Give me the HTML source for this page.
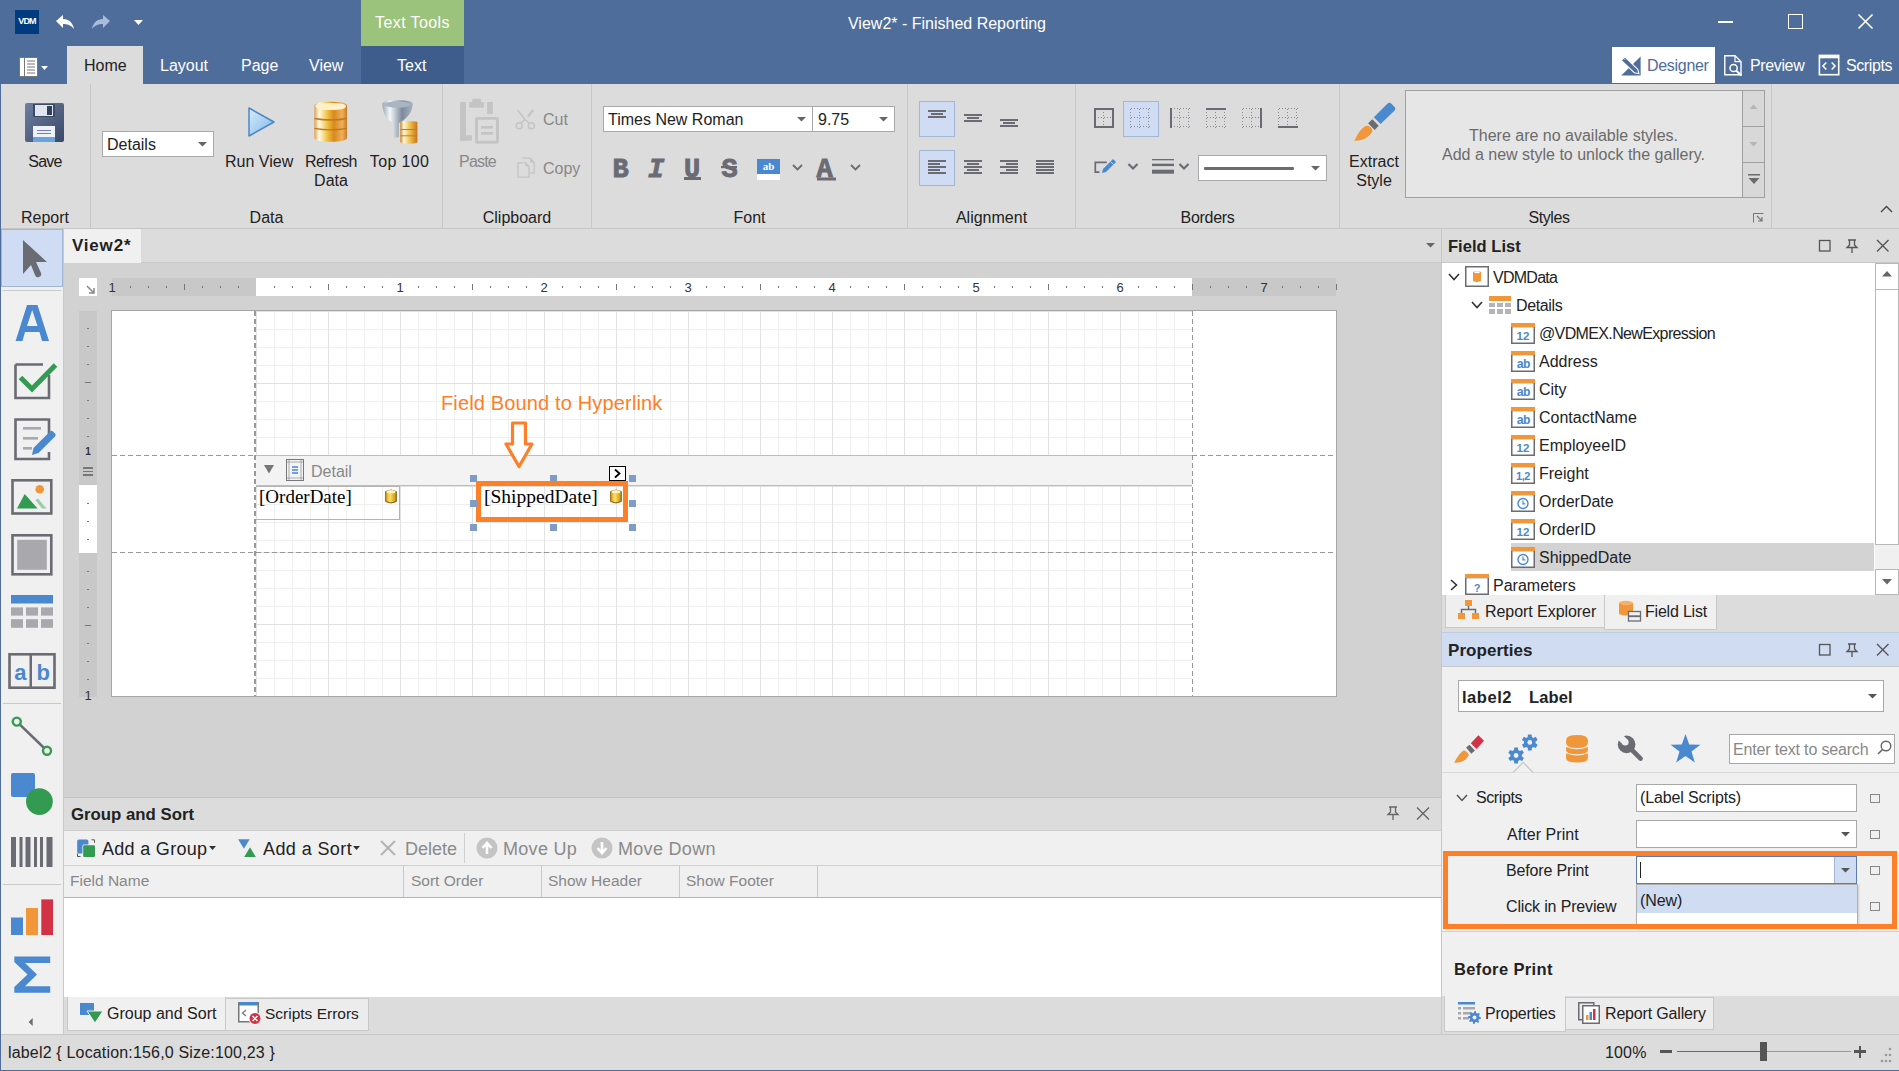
<!DOCTYPE html>
<html><head><meta charset="utf-8">
<style>
*{box-sizing:border-box;margin:0;padding:0}
html,body{width:1899px;height:1071px;overflow:hidden;background:#f0f0f0;font-family:"Liberation Sans",sans-serif;font-size:16px;color:#222}
.a{position:absolute}
.t{position:absolute;white-space:nowrap;line-height:1}
svg{position:absolute;overflow:visible}
</style></head><body>
<!-- title bar -->
<div class="a" style="left:0;top:0;width:1899px;height:84px;background:#4e6d9b"></div>
<div class="a" style="left:361px;top:0;width:103px;height:46px;background:#9cc37b"></div>
<div class="a" style="left:361px;top:46px;width:103px;height:38px;background:#3f5d8c"></div>
<div class="a" style="left:67px;top:46px;width:76px;height:38px;background:#dcdcdc"></div>
<!-- ribbon -->
<div class="a" style="left:0;top:84px;width:1899px;height:145px;background:#dcdcdc;border-bottom:1px solid #c6c6c6"></div>
<!-- toolbox -->
<div class="a" style="left:0;top:229px;width:63px;height:806px;background:#f0f0f0"></div>
<!-- doc tab row -->
<div class="a" style="left:63px;top:229px;width:1378px;height:34px;background:#dcdcdc;border-bottom:1px solid #c8c8c8"></div>
<!-- design area -->
<div class="a" style="left:63px;top:263px;width:1378px;height:534px;background:#d2d2d2"></div>
<!-- group & sort -->
<div class="a" style="left:63px;top:797px;width:1378px;height:238px;background:#f0f0f0;border-top:1px solid #c0c0c0"></div>
<!-- right panel -->
<div class="a" style="left:1441px;top:229px;width:458px;height:806px;background:#f0f0f0;border-left:1px solid #c8c8c8"></div>
<!-- status bar -->
<div class="a" style="left:0;top:1035px;width:1899px;height:36px;background:#dcdcdc;border-top:1px solid #c8c8c8"></div>
<!-- title bar content -->
<div class="a" style="left:15px;top:10px;width:24px;height:24px;background:#003b80"></div>
<div class="t" style="left:15px;top:17px;width:24px;text-align:center;color:#fff;font-size:9px;font-weight:bold;letter-spacing:-0.8px;transform:scaleY(1.0)">VDM</div>
<svg style="left:55px;top:15px" width="20" height="16" viewBox="0 0 20 16"><path d="M1 6 L8 0 L8 4 C14 4 18 8 19 14 C16 10 12 9 8 9 L8 13 Z" fill="#fff"/></svg>
<svg style="left:91px;top:15px" width="20" height="16" viewBox="0 0 20 16"><path d="M19 6 L12 0 L12 4 C6 4 2 8 1 14 C4 10 8 9 12 9 L12 13 Z" fill="#a9bcd9"/></svg>
<svg style="left:134px;top:20px" width="10" height="6" viewBox="0 0 10 6"><path d="M0 0 H9 L4.5 5 Z" fill="#fff"/></svg>
<div class="t" style="left:361px;top:15px;width:103px;text-align:center;color:#fff;font-size:16px;letter-spacing:0.4px">Text Tools</div>
<div class="t" style="left:847px;top:16px;width:200px;text-align:center;color:#fff;font-size:16px">View2* - Finished Reporting</div>
<div class="a" style="left:1718px;top:21px;width:15px;height:1.5px;background:#fff"></div>
<div class="a" style="left:1788px;top:14px;width:15px;height:15px;border:1.5px solid #fff"></div>
<svg style="left:1858px;top:14px" width="15" height="15" viewBox="0 0 15 15"><path d="M0.5 0.5 L14.5 14.5 M14.5 0.5 L0.5 14.5" stroke="#fff" stroke-width="1.6"/></svg>
<!-- tab row -->
<svg style="left:19px;top:57px" width="30" height="20" viewBox="0 0 30 20"><rect x="0.5" y="0.5" width="18" height="19" fill="#fff" stroke="#777"/><rect x="5" y="1" width="1" height="18" fill="#777"/><path d="M8 4h8M8 7h8M8 10h8M8 13h8M8 16h8" stroke="#777" stroke-width="1"/><path d="M22 9 H29 L25.5 13 Z" fill="#fff"/></svg>
<div class="t" style="left:84px;top:58px;font-size:16px;color:#222">Home</div>
<div class="t" style="left:160px;top:58px;font-size:16px;color:#fff">Layout</div>
<div class="t" style="left:241px;top:58px;font-size:16px;color:#fff">Page</div>
<div class="t" style="left:309px;top:58px;font-size:16px;color:#fff">View</div>
<div class="t" style="left:397px;top:58px;font-size:16px;color:#fff">Text</div>
<div class="a" style="left:1612px;top:47px;width:103px;height:36px;background:#fff"></div>
<svg style="left:1620px;top:54px" width="24" height="24" viewBox="1620 54 24 24">
<path d="M1621.3 75.4 L1640.6 56.5 V75.4 Z" fill="#4e6d9b"/>
<path d="M1621.3 60.3 L1624.8 56.8 L1637.8 69.3 L1639 73.8 L1634.5 72.8 Z" fill="#4e6d9b" stroke="#fff" stroke-width="1.1" stroke-linejoin="round"/><path d="M1623 57.8 L1625 59.8" stroke="#fff" stroke-width="0.8"/>
</svg>
<div class="t" style="left:1647px;top:58px;font-size:16px;color:#4e6d9b;letter-spacing:-0.3px">Designer</div>
<svg style="left:1722px;top:53px" width="24" height="25" viewBox="1722 53 24 25">
<path d="M1724.8 55.7 H1735 L1741 61.7 V74.7 H1724.8 Z" fill="none" stroke="#fff" stroke-width="1.4"/>
<path d="M1735 55.7 V61.7 H1741" fill="none" stroke="#fff" stroke-width="1.2"/>
<circle cx="1733.6" cy="68" r="3.6" fill="#4e6d9b" stroke="#fff" stroke-width="1.5"/>
<path d="M1736.3 70.7 L1741.5 75.6" stroke="#fff" stroke-width="2"/>
</svg>
<div class="t" style="left:1750px;top:58px;font-size:16px;color:#fff;letter-spacing:-0.37px">Preview</div>
<svg style="left:1817px;top:53px" width="24" height="24" viewBox="1817 53 24 24">
<rect x="1819.4" y="55.4" width="19.3" height="19.3" fill="none" stroke="#fff" stroke-width="1.6"/>
<rect x="1819" y="55" width="20" height="3.3" fill="#fff"/>
<path d="M1826.3 62.5 L1823 66 L1826.3 69.5 M1831.7 62.5 L1835 66 L1831.7 69.5" fill="none" stroke="#fff" stroke-width="1.6"/>
</svg>
<div class="t" style="left:1846px;top:58px;font-size:16px;color:#fff;letter-spacing:-0.4px">Scripts</div>

<!-- ribbon separators -->
<div class="a" style="left:90px;top:84px;width:1px;height:144px;background:#c8c8c8"></div>
<div class="a" style="left:442px;top:84px;width:1px;height:144px;background:#c8c8c8"></div>
<div class="a" style="left:591px;top:84px;width:1px;height:144px;background:#c8c8c8"></div>
<div class="a" style="left:907px;top:84px;width:1px;height:144px;background:#c8c8c8"></div>
<div class="a" style="left:1075px;top:84px;width:1px;height:144px;background:#c8c8c8"></div>
<div class="a" style="left:1339px;top:84px;width:1px;height:144px;background:#c8c8c8"></div>
<div class="a" style="left:1771px;top:84px;width:1px;height:144px;background:#c8c8c8"></div>
<!-- group labels -->
<div class="t" style="left:0;top:210px;width:90px;text-align:center">Report</div>
<div class="t" style="left:91px;top:210px;width:351px;text-align:center">Data</div>
<div class="t" style="left:443px;top:210px;width:148px;text-align:center">Clipboard</div>
<div class="t" style="left:592px;top:210px;width:315px;text-align:center">Font</div>
<div class="t" style="left:908px;top:210px;width:167px;text-align:center">Alignment</div>
<div class="t" style="left:1076px;top:210px;width:263px;text-align:center;letter-spacing:-0.3px">Borders</div>
<div class="t" style="left:1340px;top:210px;width:418px;text-align:center;letter-spacing:-0.4px">Styles</div>
<svg style="left:1753px;top:213px" width="11" height="10" viewBox="0 0 11 10"><path d="M0.5 9.5 V0.5 H10.5" fill="none" stroke="#777"/><path d="M4 3 L9 8 M9 4 V8 H5" fill="none" stroke="#777" stroke-width="1.2"/></svg>
<svg style="left:1880px;top:205px" width="13" height="8" viewBox="0 0 13 8"><path d="M1 7 L6.5 1.5 L12 7" fill="none" stroke="#444" stroke-width="1.4"/></svg>
<!-- Save -->
<svg style="left:25px;top:103px" width="39" height="39" viewBox="0 0 39 39">
<defs><linearGradient id="sv" x1="0" y1="0" x2="1" y2="1"><stop offset="0" stop-color="#6f7fa0"/><stop offset="1" stop-color="#3a4868"/></linearGradient></defs>
<rect x="0" y="0" width="39" height="39" rx="2" fill="url(#sv)"/>
<rect x="8" y="1" width="22" height="13" fill="#3d4a66"/><rect x="10" y="2" width="18" height="11" fill="#dfe6f0"/><rect x="22" y="3" width="5" height="9" fill="#33405c"/>
<rect x="8" y="23" width="22" height="16" fill="#eef2f8"/><rect x="8" y="34" width="22" height="5" fill="#6aa4da"/><path d="M12 27.5 H26 M12 30.5 H26" stroke="#7282b8" stroke-width="1"/>
</svg>
<div class="t" style="left:0;top:154px;width:90px;text-align:center;letter-spacing:-0.8px">Save</div>
<!-- Details combo -->
<div class="a" style="left:102px;top:131px;width:112px;height:26px;background:#fff;border:1px solid #a9a9a9"></div>
<div class="t" style="left:107px;top:137px">Details</div>
<svg style="left:198px;top:142px" width="9" height="5" viewBox="0 0 9 5"><path d="M0 0 H9 L4.5 4.5 Z" fill="#666"/></svg>
<!-- Run View -->
<svg style="left:248px;top:107px" width="27" height="30" viewBox="0 0 27 30"><defs><linearGradient id="rv" x1="0" y1="0" x2="1" y2="1"><stop offset="0" stop-color="#d6ecfb"/><stop offset="1" stop-color="#7fb8ea"/></linearGradient></defs><path d="M1 1 L26 15 L1 29 Z" fill="url(#rv)" stroke="#4d86c6" stroke-width="1.5" stroke-linejoin="round"/></svg>
<div class="t" style="left:225px;top:154px;width:68px;text-align:center">Run View</div>
<!-- Refresh Data -->
<svg style="left:305px;top:95px" width="55" height="55" viewBox="305 95 55 55">
<defs><linearGradient id="db" x1="0" y1="0" x2="1" y2="0"><stop offset="0" stop-color="#e0a050"/><stop offset="0.15" stop-color="#fffbe6"/><stop offset="0.4" stop-color="#f0c03e"/><stop offset="0.6" stop-color="#d8891e"/><stop offset="0.85" stop-color="#eeb060"/><stop offset="1" stop-color="#c87a22"/></linearGradient></defs>
<path d="M314.3 106 Q314.3 101.7 330.7 101.7 Q347.1 101.7 347.1 106 V137.5 Q347.1 141.8 330.7 141.8 Q314.3 141.8 314.3 137.5 Z" fill="url(#db)"/>
<path d="M315.5 106 Q315.5 103 330.7 103 Q346 103 346 106 Q346 110 330.7 110 Q315.5 110 315.5 106 Z" fill="#fff0c8"/>
<path d="M314.5 118.5 Q330.7 121.5 347 118.5 M314.5 128.3 Q330.7 131.3 347 128.3" fill="none" stroke="#c0781e" stroke-width="1.3"/>
</svg>
<div class="t" style="left:295px;top:154px;width:72px;text-align:center;letter-spacing:-0.6px">Refresh</div>
<div class="t" style="left:295px;top:173px;width:72px;text-align:center">Data</div>
<!-- Top 100 -->
<svg style="left:370px;top:95px" width="60" height="55" viewBox="370 95 60 55">
<defs><linearGradient id="fn2" x1="0" y1="0" x2="1" y2="0"><stop offset="0" stop-color="#9aa6b4"/><stop offset="0.25" stop-color="#f4f8fa"/><stop offset="0.65" stop-color="#7d8a9c"/><stop offset="1" stop-color="#aab4c0"/></linearGradient>
<linearGradient id="db2" x1="0" y1="0" x2="1" y2="0"><stop offset="0" stop-color="#c9822a"/><stop offset="0.2" stop-color="#fff6dc"/><stop offset="0.55" stop-color="#f1c24a"/><stop offset="1" stop-color="#c8741e"/></linearGradient></defs>
<path d="M382.3 104 Q382 100.5 397.5 100.3 Q413 100.5 412.8 104 Q412.5 112 406 118 Q401 122.5 398.8 123 V137 Q396 138.5 393.6 137 V123 Q389 121.5 386 117 Q382.5 111 382.3 104 Z" fill="url(#fn2)"/>
<ellipse cx="397.5" cy="104.5" rx="13" ry="3.3" fill="#a9b5c2"/>
<path d="M400.3 122.5 Q400 121 408.8 121 Q417.5 121 417.4 122.5 V142 Q417.4 143.6 408.8 143.6 Q400.3 143.6 400.3 142 Z" fill="url(#db2)"/>
<path d="M400.5 129.5 H417.2 M400.5 135.8 H417.2" stroke="#c27a25" stroke-width="1"/>
</svg>
<div class="t" style="left:369px;top:154px;width:61px;text-align:center;letter-spacing:0.35px">Top 100</div>
<!-- Paste -->
<svg style="left:452px;top:95px" width="90" height="90" viewBox="452 95 90 90">
<g fill="#c4c4c4">
<rect x="460" y="102" width="6" height="38.8" rx="1"/><rect x="460" y="135.2" width="12" height="5.6" rx="1"/>
<rect x="469.2" y="102" width="14.7" height="5.8" rx="1"/><rect x="472.2" y="98.8" width="8.8" height="4" rx="1"/>
<rect x="487.1" y="102" width="5.8" height="11.9"/>
<rect x="481" y="126" width="11.9" height="2.6"/><rect x="481" y="132" width="11.9" height="2.7"/>
</g>
<rect x="476.5" y="118.4" width="20.9" height="23.9" rx="0.8" fill="none" stroke="#c4c4c4" stroke-width="2.9"/>
<g fill="none" stroke="#c4c4c4">
<path d="M517.5 110 L525 119.5 L529 123" stroke-width="1.4"/><path d="M533.1 110 L528 116.5" stroke-width="2.2"/><path d="M525 119.5 L521 123" stroke-width="1.4"/>
<circle cx="519.2" cy="125.7" r="3" stroke-width="1.4"/><circle cx="531.4" cy="125.7" r="3" stroke-width="1.4"/>
<path d="M522.3 158.2 H530 L534.2 162.4 V173 H529.7" stroke-width="1.3"/>
<path d="M518 162.8 H525.5 L529.1 166.4 V177.2 H518 Z" stroke-width="1.3" fill="#dcdcdc"/>
</g>
<path d="M525.5 162.8 V166.4 H529.1 Z M530 158.2 V162.4 H534.2 Z" fill="#c4c4c4"/>
</svg>
<div class="t" style="left:457px;top:154px;width:41px;text-align:center;color:#888;letter-spacing:-0.8px">Paste</div>

<div class="t" style="left:543px;top:112px;color:#888">Cut</div>

<div class="t" style="left:543px;top:161px;color:#888">Copy</div>

<!-- Font group -->
<div class="a" style="left:603px;top:106px;width:211px;height:26px;background:#fff;border:1px solid #a9a9a9"></div>
<div class="a" style="left:812px;top:106px;width:83px;height:26px;background:#fff;border:1px solid #a9a9a9"></div>
<div class="t" style="left:608px;top:112px">Times New Roman</div>
<div class="t" style="left:818px;top:112px">9.75</div>
<svg style="left:797px;top:117px" width="9" height="5" viewBox="0 0 9 5"><path d="M0 0 H9 L4.5 4.5 Z" fill="#666"/></svg>
<svg style="left:879px;top:117px" width="9" height="5" viewBox="0 0 9 5"><path d="M0 0 H9 L4.5 4.5 Z" fill="#666"/></svg>
<svg style="left:610px;top:155px" width="260" height="28" viewBox="0 0 260 28">
<g fill="#6b6b74" stroke="#6b6b74" stroke-width="0.9" font-family="Liberation Mono" font-weight="bold" font-size="27">
<text x="2.5" y="22">B</text>
<text x="38" y="22" font-style="italic">I</text>
<text x="74" y="22">U</text>
<text x="111.5" y="22">S</text>
<text x="206.5" y="22">A</text>
</g>
<rect x="74" y="22" width="17" height="3" fill="#6b6b74"/>
<rect x="111" y="11" width="16" height="2.2" fill="#6b6b74"/>
<rect x="207" y="22.5" width="19" height="3" fill="#6b6b74"/>
<rect x="147" y="4" width="23" height="15" fill="#4a88cf"/><rect x="147" y="19" width="23" height="6" fill="#fff"/>
<text x="158.5" y="15" font-family="Liberation Serif" font-weight="bold" font-size="11" fill="#fff" text-anchor="middle">ab</text>
<path d="M183 10 L187.5 14.5 L192 10" fill="none" stroke="#6b6b74" stroke-width="1.8"/>
<path d="M241 10 L245.5 14.5 L250 10" fill="none" stroke="#6b6b74" stroke-width="1.8"/>
</svg>
<!-- Alignment group -->
<div class="a" style="left:919px;top:101px;width:36px;height:36px;background:#cfdcf3;border:1px solid #a3b6d6"></div>
<div class="a" style="left:919px;top:150px;width:36px;height:36px;background:#cfdcf3;border:1px solid #a3b6d6"></div>
<svg style="left:900px;top:100px" width="170" height="90" viewBox="0 0 170 90" shape-rendering="crispEdges">
<g fill="#6b6b73">
<rect x="28" y="10" width="18" height="2"/><rect x="31" y="13" width="12" height="2"/><rect x="28" y="16" width="18" height="2"/>
<rect x="64" y="14" width="18" height="2"/><rect x="67" y="17" width="12" height="2"/><rect x="64" y="20" width="18" height="2"/>
<rect x="100" y="19" width="18" height="2"/><rect x="103" y="22" width="12" height="2"/><rect x="100" y="25" width="18" height="2"/>
<rect x="28" y="60" width="18" height="2"/><rect x="28" y="63" width="12" height="2"/><rect x="28" y="66" width="18" height="2"/><rect x="28" y="69" width="12" height="2"/><rect x="28" y="72" width="18" height="2"/>
<rect x="64" y="60" width="18" height="2"/><rect x="67" y="63" width="12" height="2"/><rect x="64" y="66" width="18" height="2"/><rect x="67" y="69" width="12" height="2"/><rect x="64" y="72" width="18" height="2"/>
<rect x="100" y="60" width="18" height="2"/><rect x="106" y="63" width="12" height="2"/><rect x="100" y="66" width="18" height="2"/><rect x="106" y="69" width="12" height="2"/><rect x="100" y="72" width="18" height="2"/>
<rect x="136" y="60" width="18" height="2"/><rect x="136" y="63" width="18" height="2"/><rect x="136" y="66" width="18" height="2"/><rect x="136" y="69" width="18" height="2"/><rect x="136" y="72" width="18" height="2"/>
</g></svg>
<!-- Borders group -->
<div class="a" style="left:1123px;top:101px;width:36px;height:36px;background:#cfdcf3;border:1px solid #a3b6d6"></div>
<svg style="left:1090px;top:104px" width="215" height="28" viewBox="0 0 215 28">
<defs>
<g id="dg" stroke="#8c8c92" stroke-width="1" stroke-dasharray="1 2" fill="none"><path d="M1 0.5 H20 M1 9.5 H20 M1 18.5 H20 M0.5 1 V20 M9.5 1 V20 M18.5 1 V20"/></g>
</defs>
<g transform="translate(4,4)"><rect x="1" y="1" width="18" height="18" fill="none" stroke="#6b6b73" stroke-width="2"/><path d="M9.5 4 V17 M4 9.5 H17" stroke="#8c8c92" stroke-dasharray="1 2" fill="none"/></g>
<g transform="translate(40,4)"><use href="#dg"/></g>
<g transform="translate(80,4)"><use href="#dg"/><rect x="0" y="0" width="2" height="20" fill="#6b6b73"/></g>
<g transform="translate(116,4)"><use href="#dg"/><rect x="0" y="0" width="20" height="2" fill="#6b6b73"/></g>
<g transform="translate(152,4)"><use href="#dg"/><rect x="18" y="0" width="2" height="20" fill="#6b6b73"/></g>
<g transform="translate(188,4)"><use href="#dg"/><rect x="0" y="18" width="20" height="2" fill="#6b6b73"/></g>
</svg>
<svg style="left:1094px;top:158px" width="100" height="16" viewBox="0 0 100 16">
<path d="M12.8 4.4 H1.3 V14.2 H5.5" fill="none" stroke="#6b6b73" stroke-width="1.7"/>
<path d="M8 15 L9 11 L19 1 L22 4 L12 14 Z" fill="#4a88cf"/><path d="M16.5 3.5 L19.5 6.5" stroke="#dcdcdc" stroke-width="0.9"/>
<path d="M34.5 6 L39 10.5 L43.5 6" fill="none" stroke="#6b6b73" stroke-width="2.2"/>
<rect x="58" y="1" width="22" height="1.3" fill="#6b6b73"/><rect x="58" y="5.7" width="22" height="2.4" fill="#6b6b73"/><rect x="58" y="11.7" width="22" height="4" fill="#6b6b73"/>
<path d="M85.5 6 L90 10.5 L94.5 6" fill="none" stroke="#6b6b73" stroke-width="2.2"/>
</svg>
<div class="a" style="left:1198px;top:155px;width:129px;height:26px;background:#fff;border:1px solid #a9a9a9"></div>
<div class="a" style="left:1204px;top:167px;width:90px;height:3px;background:#6b6b73;border-radius:1px"></div>
<svg style="left:1311px;top:166px" width="9" height="5" viewBox="0 0 9 5"><path d="M0 0 H9 L4.5 4.5 Z" fill="#666"/></svg>
<!-- Extract Style -->
<svg style="left:1340px;top:85px" width="70" height="70" viewBox="1340 85 70 70">
<path d="M1373.8 117.2 L1387.6 103.6 Q1389.4 101.8 1391.2 103.6 L1394.6 107 Q1396.4 108.8 1394.6 110.6 L1380.6 123.9 Z" fill="#4a88cf"/>
<path d="M1368.1 123.2 L1372.4 119.2 L1378.7 125.8 L1374.7 129.9 Z" fill="#6b6b73"/>
<path d="M1354.5 141 Q1358 131 1364.7 126.4 Q1368 124.5 1371 127.5 Q1373.5 130.5 1371.5 133 Q1366 140.5 1354.5 141 Z" fill="#f2963a"/>
</svg>
<div class="t" style="left:1340px;top:154px;width:68px;text-align:center">Extract</div>
<div class="t" style="left:1340px;top:173px;width:68px;text-align:center">Style</div>
<!-- Styles gallery -->
<div class="a" style="left:1405px;top:90px;width:360px;height:108px;background:#e6e6e6;border:1px solid #a0a0a0"></div>
<div class="a" style="left:1742px;top:90px;width:23px;height:108px;background:#d8d8d8;border:1px solid #a0a0a0"></div>
<div class="a" style="left:1742px;top:126px;width:23px;height:1px;background:#a0a0a0"></div>
<div class="a" style="left:1742px;top:162px;width:23px;height:1px;background:#a0a0a0"></div>
<svg style="left:1748px;top:104px" width="12" height="82" viewBox="0 0 12 82"><path d="M1.5 5 L5.5 0.5 L9.5 5 Z" fill="#b5b5b5"/><path d="M1.5 38 L5.5 42.5 L9.5 38 Z" fill="#b5b5b5"/><rect x="0" y="70" width="12" height="1.5" fill="#6b6b6b"/><path d="M0.5 74 L6 80 L11.5 74 Z" fill="#6b6b6b"/></svg>
<div class="t" style="left:1405px;top:128px;width:337px;text-align:center;color:#6b6b6b">There are no available styles.</div>
<div class="t" style="left:1405px;top:147px;width:337px;text-align:center;color:#6b6b6b">Add a new style to unlock the gallery.</div>

<!-- toolbox -->
<div class="a" style="left:1px;top:229px;width:62px;height:58px;background:#cfdcf3;border:1px solid #a3b6d6"></div>
<svg style="left:0;top:229px" width="63" height="806" viewBox="0 229 63 806">
<path d="M23 240 L47 262 L36 262 L41 273 Q42 276 39 277 Q36 278 35 275 L31 265 L23 274 Z" fill="#6b6b73"/>
<rect x="3" y="290" width="58" height="1" fill="#c8c8c8"/>
<path d="M15.6 341 L27 305 L37.5 305 L49 341 L42 341 L39.5 332 L25 332 L22.5 341 Z M27 326 L37.5 326 L32.2 310 Z" fill="#4a88cf" fill-rule="evenodd"/>
<path d="M15.5 364.5 H43 M49 375 V398 H15.5 V364.5" fill="none" stroke="#6b6b73" stroke-width="2.6"/>
<path d="M20.5 377.5 L32 389 L55.5 365" fill="none" stroke="#339a52" stroke-width="5"/>
<path d="M49 435 V419.5 H15.5 V459 H49 V452" fill="none" stroke="#6b6b73" stroke-width="2.6"/>
<rect x="23" y="427" width="18" height="2.6" fill="#a8a8ad"/><rect x="23" y="437" width="15" height="2.6" fill="#a8a8ad"/><rect x="23" y="447" width="9" height="2.6" fill="#a8a8ad"/>
<path d="M32 455 L33.5 448 L50 431.5 Q51.5 430 53 431.5 L55 433.5 Q56.5 435 55 436.5 L38.5 453 Z" fill="#4a88cf"/>
<rect x="12.5" y="480.3" width="38.8" height="33.2" fill="none" stroke="#6b6b73" stroke-width="2.6"/>
<circle cx="39.7" cy="489.3" r="4.3" fill="#f2963a"/>
<path d="M17 508.6 L24.7 494 L37.6 508.6 Z" fill="#339a52"/><path d="M35.4 500 L38 498.5 L46.5 508.6 L42 508.6 Z" fill="#9ccfa9"/>
<rect x="12.5" y="535.3" width="38.8" height="39" fill="none" stroke="#6b6b73" stroke-width="2.6"/>
<rect x="17.2" y="539.8" width="29.6" height="30" fill="#a8a8ad"/>
<rect x="11" y="595" width="42" height="8.5" fill="#4a88cf"/>
<g fill="#a8a8ad"><rect x="11" y="607.4" width="12" height="8.2"/><rect x="26" y="607.4" width="12" height="8.2"/><rect x="41" y="607.4" width="12" height="8.2"/><rect x="11" y="619.2" width="12" height="8.6"/><rect x="26" y="619.2" width="12" height="8.6"/><rect x="41" y="619.2" width="12" height="8.6"/></g>
<rect x="9.5" y="654.3" width="45" height="33.4" fill="none" stroke="#6b6b73" stroke-width="2.6"/><rect x="29.5" y="654" width="2.5" height="34" fill="#6b6b73"/>
<text x="20.3" y="679.5" font-family="Liberation Sans" font-weight="bold" font-size="22" fill="#4a88cf" text-anchor="middle">a</text>
<text x="43.3" y="679.5" font-family="Liberation Sans" font-weight="bold" font-size="22" fill="#4a88cf" text-anchor="middle">b</text>
<rect x="3" y="703" width="58" height="1" fill="#c8c8c8"/>
<path d="M16.8 721.6 L47 750.8" stroke="#6b6b73" stroke-width="2.6"/>
<circle cx="16.8" cy="721.6" r="4" fill="#f0f0f0" stroke="#339a52" stroke-width="2.4"/>
<circle cx="47" cy="750.8" r="4" fill="#f0f0f0" stroke="#339a52" stroke-width="2.4"/>
<rect x="11" y="773" width="24" height="24" rx="2" fill="#4a88cf"/>
<circle cx="39.4" cy="801.6" r="13.4" fill="#339a52"/>
<g fill="#6b6b73"><rect x="11" y="837" width="5" height="30"/><rect x="19.5" y="837" width="3" height="30"/><rect x="25.5" y="837" width="5" height="30"/><rect x="34" y="837" width="3" height="30"/><rect x="40" y="837" width="3" height="30"/><rect x="46.5" y="837" width="6" height="30"/></g>
<rect x="3" y="884" width="58" height="1" fill="#c8c8c8"/>
<rect x="11" y="917.5" width="12" height="17.5" fill="#4a88cf"/><rect x="26" y="908" width="12" height="27" fill="#f2963a"/><rect x="41.3" y="899.4" width="11.7" height="35.6" fill="#d33145"/>
<path d="M14.3 956.5 H50.2 V963 H25 L37 974.6 L25 986.2 H50.2 V992.7 H14.3 V987 L27.5 974.6 L14.3 962 Z" fill="#4a88cf"/>
<path d="M32.7 1018 V1026 L28.6 1022 Z" fill="#6b6b73"/>
</svg>

<!-- design surface -->
<div class="a" style="left:63px;top:229px;width:78px;height:34px;background:#f0f0f0"></div>
<div class="t" style="left:72px;top:237px;font-weight:bold;font-size:17px;letter-spacing:0.8px;color:#222">View2*</div>
<svg style="left:1426px;top:243px" width="9" height="5" viewBox="0 0 9 5"><path d="M0 0 H9 L4.5 4.5 Z" fill="#666"/></svg>
<div class="a" style="left:79px;top:278px;width:18px;height:18px;background:#fff"></div>
<svg style="left:86px;top:285px" width="9" height="9" viewBox="0 0 9 9"><path d="M1 1 L7 7 M8 3 V8 H3" fill="none" stroke="#888" stroke-width="1.5"/></svg>
<div class="a" style="left:112px;top:278px;width:144px;height:18px;background:#c8c8c8"></div>
<div class="a" style="left:256px;top:278px;width:936px;height:18px;background:#fff"></div>
<div class="a" style="left:1192px;top:278px;width:144px;height:18px;background:#c8c8c8"></div>
<div class="a" style="left:79px;top:311px;width:18px;height:174px;background:#c8c8c8"></div>
<div class="a" style="left:79px;top:485px;width:18px;height:68px;background:#fff"></div>
<div class="a" style="left:79px;top:553px;width:18px;height:144px;background:#c8c8c8"></div>
<svg style="left:0;top:0" width="1899" height="1071" viewBox="0 0 1899 1071" shape-rendering="crispEdges">
<g fill="#777">
<rect x="130" y="286" width="1" height="2"/>
<rect x="148" y="286" width="1" height="2"/>
<rect x="166" y="286" width="1" height="2"/>
<rect x="184" y="284" width="1" height="6"/>
<rect x="202" y="286" width="1" height="2"/>
<rect x="220" y="286" width="1" height="2"/>
<rect x="238" y="286" width="1" height="2"/>
<rect x="274" y="286" width="1" height="2"/>
<rect x="292" y="286" width="1" height="2"/>
<rect x="310" y="286" width="1" height="2"/>
<rect x="328" y="284" width="1" height="6"/>
<rect x="346" y="286" width="1" height="2"/>
<rect x="364" y="286" width="1" height="2"/>
<rect x="382" y="286" width="1" height="2"/>
<rect x="418" y="286" width="1" height="2"/>
<rect x="436" y="286" width="1" height="2"/>
<rect x="454" y="286" width="1" height="2"/>
<rect x="472" y="284" width="1" height="6"/>
<rect x="490" y="286" width="1" height="2"/>
<rect x="508" y="286" width="1" height="2"/>
<rect x="526" y="286" width="1" height="2"/>
<rect x="562" y="286" width="1" height="2"/>
<rect x="580" y="286" width="1" height="2"/>
<rect x="598" y="286" width="1" height="2"/>
<rect x="616" y="284" width="1" height="6"/>
<rect x="634" y="286" width="1" height="2"/>
<rect x="652" y="286" width="1" height="2"/>
<rect x="670" y="286" width="1" height="2"/>
<rect x="706" y="286" width="1" height="2"/>
<rect x="724" y="286" width="1" height="2"/>
<rect x="742" y="286" width="1" height="2"/>
<rect x="760" y="284" width="1" height="6"/>
<rect x="778" y="286" width="1" height="2"/>
<rect x="796" y="286" width="1" height="2"/>
<rect x="814" y="286" width="1" height="2"/>
<rect x="850" y="286" width="1" height="2"/>
<rect x="868" y="286" width="1" height="2"/>
<rect x="886" y="286" width="1" height="2"/>
<rect x="904" y="284" width="1" height="6"/>
<rect x="922" y="286" width="1" height="2"/>
<rect x="940" y="286" width="1" height="2"/>
<rect x="958" y="286" width="1" height="2"/>
<rect x="994" y="286" width="1" height="2"/>
<rect x="1012" y="286" width="1" height="2"/>
<rect x="1030" y="286" width="1" height="2"/>
<rect x="1048" y="284" width="1" height="6"/>
<rect x="1066" y="286" width="1" height="2"/>
<rect x="1084" y="286" width="1" height="2"/>
<rect x="1102" y="286" width="1" height="2"/>
<rect x="1138" y="286" width="1" height="2"/>
<rect x="1156" y="286" width="1" height="2"/>
<rect x="1174" y="286" width="1" height="2"/>
<rect x="1192" y="284" width="1" height="6"/>
<rect x="1210" y="286" width="1" height="2"/>
<rect x="1228" y="286" width="1" height="2"/>
<rect x="1246" y="286" width="1" height="2"/>
<rect x="1282" y="286" width="1" height="2"/>
<rect x="1300" y="286" width="1" height="2"/>
<rect x="1318" y="286" width="1" height="2"/>
<rect x="1336" y="284" width="1" height="6"/>
</g>
</svg>
<div class="t" style="left:102px;top:281px;width:20px;text-align:center;font-size:13px;color:#333">1</div>
<div class="t" style="left:390px;top:281px;width:20px;text-align:center;font-size:13px;color:#333">1</div>
<div class="t" style="left:534px;top:281px;width:20px;text-align:center;font-size:13px;color:#333">2</div>
<div class="t" style="left:678px;top:281px;width:20px;text-align:center;font-size:13px;color:#333">3</div>
<div class="t" style="left:822px;top:281px;width:20px;text-align:center;font-size:13px;color:#333">4</div>
<div class="t" style="left:966px;top:281px;width:20px;text-align:center;font-size:13px;color:#333">5</div>
<div class="t" style="left:1110px;top:281px;width:20px;text-align:center;font-size:13px;color:#333">6</div>
<div class="t" style="left:1254px;top:281px;width:20px;text-align:center;font-size:13px;color:#333">7</div>
<svg style="left:0;top:0" width="1899" height="1071" viewBox="0 0 1899 1071" shape-rendering="crispEdges"><g fill="#777">
<rect x="87" y="328" width="2" height="1"/>
<rect x="87" y="346" width="2" height="1"/>
<rect x="87" y="364" width="2" height="1"/>
<rect x="87" y="400" width="2" height="1"/>
<rect x="87" y="418" width="2" height="1"/>
<rect x="87" y="436" width="2" height="1"/>
<rect x="85" y="382" width="6" height="1"/>
<rect x="87" y="503" width="2" height="1"/>
<rect x="87" y="521" width="2" height="1"/>
<rect x="87" y="539" width="2" height="1"/>
<rect x="87" y="571" width="2" height="1"/>
<rect x="87" y="589" width="2" height="1"/>
<rect x="87" y="607" width="2" height="1"/>
<rect x="87" y="643" width="2" height="1"/>
<rect x="87" y="661" width="2" height="1"/>
<rect x="87" y="679" width="2" height="1"/>
<rect x="85" y="625" width="6" height="1"/>
<rect x="83" y="467" width="10" height="1.5"/><rect x="83" y="470.5" width="10" height="1.5"/><rect x="83" y="474" width="10" height="1.5"/>
</g></svg>
<div class="t" style="left:80px;top:447px;width:16px;text-align:center;font-size:10px;font-weight:bold;color:#333">1</div>
<div class="t" style="left:78px;top:689px;width:20px;text-align:center;font-size:13px;color:#333">1</div>
<div class="a" style="left:111px;top:310px;width:1226px;height:387px;background:#fff;border:1px solid #a6a6a6"></div>
<div class="a" style="left:256px;top:311px;width:936px;height:144px;background-image:linear-gradient(to right,#e2e2e2 1px,transparent 1px),linear-gradient(to bottom,#e2e2e2 1px,transparent 1px),linear-gradient(to right,#efefef 1px,transparent 1px),linear-gradient(to bottom,#efefef 1px,transparent 1px);background-size:72px 72px,72px 72px,18px 18px,18px 18px"></div>
<div class="a" style="left:256px;top:486px;width:936px;height:67px;background-image:linear-gradient(to right,#e2e2e2 1px,transparent 1px),linear-gradient(to bottom,#e2e2e2 1px,transparent 1px),linear-gradient(to right,#efefef 1px,transparent 1px),linear-gradient(to bottom,#efefef 1px,transparent 1px);background-size:72px 72px,72px 72px,18px 18px,18px 18px"></div>
<div class="a" style="left:256px;top:552px;width:936px;height:144px;background-image:linear-gradient(to right,#e2e2e2 1px,transparent 1px),linear-gradient(to bottom,#e2e2e2 1px,transparent 1px),linear-gradient(to right,#efefef 1px,transparent 1px),linear-gradient(to bottom,#efefef 1px,transparent 1px);background-size:72px 72px,72px 72px,18px 18px,18px 18px"></div>
<div class="a" style="left:256px;top:455px;width:936px;height:31px;background:#f3f3f3;border-top:1px solid #bdbdbd;border-bottom:1px solid #bdbdbd"></div>
<div class="a" style="left:112px;top:455px;width:144px;height:1px;background-image:linear-gradient(to right,#999 5px,transparent 5px);background-size:8px 1px"></div>
<div class="a" style="left:1192px;top:455px;width:144px;height:1px;background-image:linear-gradient(to right,#999 5px,transparent 5px);background-size:8px 1px"></div>
<div class="a" style="left:112px;top:552px;width:1224px;height:1px;background-image:linear-gradient(to right,#999 5px,transparent 5px);background-size:8px 1px"></div>
<div class="a" style="left:254px;top:311px;width:2px;height:385px;background-image:linear-gradient(to bottom,#999 5px,transparent 5px);background-size:2px 8px"></div>
<div class="a" style="left:1192px;top:311px;width:1px;height:385px;background-image:linear-gradient(to bottom,#999 5px,transparent 5px);background-size:1px 8px"></div>
<svg style="left:264px;top:465px" width="10" height="9" viewBox="0 0 10 9"><path d="M0 0 H10 L5 8.5 Z" fill="#777"/></svg>
<svg style="left:286px;top:459px" width="18" height="22" viewBox="0 0 18 22"><rect x="0.5" y="0.5" width="17" height="21" fill="#f3f3f3" stroke="#777"/><path d="M3 1 V21 M15 1 V21 M1 3 H17 M1 19 H17" stroke="#999" stroke-width="0.8"/><path d="M6 8 H12 M6 11 H12 M6 14 H12" stroke="#4a88cf" stroke-width="1.3"/></svg>
<div class="t" style="left:311px;top:464px;font-size:16px;color:#888">Detail</div>
<div class="a" style="left:256px;top:486px;width:144px;height:34px;border:1px solid #b4b4b4;border-left:none"></div>
<div class="t" style="left:259px;top:487px;font-family:'Liberation Serif',serif;font-size:19px;color:#000">[OrderDate]</div>
<svg style="left:385px;top:489px" width="12" height="15" viewBox="0 0 12 15"><defs><linearGradient id="g385" x1="0" x2="1"><stop offset="0" stop-color="#d9a21a"/><stop offset="0.4" stop-color="#ffe066"/><stop offset="1" stop-color="#c28a10"/></linearGradient></defs><path d="M0.7 2.5 Q6 -0.5 11.3 2.5 V12.5 Q6 15.5 0.7 12.5 Z" fill="url(#g385)" stroke="#8a5a08" stroke-width="1"/><ellipse cx="6" cy="2.7" rx="4.5" ry="1.6" fill="#fff3c0"/></svg>
<div class="t" style="left:484px;top:487px;font-family:'Liberation Serif',serif;font-size:19.5px;color:#000">[ShippedDate]</div>
<svg style="left:610px;top:489px" width="12" height="15" viewBox="0 0 12 15"><defs><linearGradient id="g610" x1="0" x2="1"><stop offset="0" stop-color="#d9a21a"/><stop offset="0.4" stop-color="#ffe066"/><stop offset="1" stop-color="#c28a10"/></linearGradient></defs><path d="M0.7 2.5 Q6 -0.5 11.3 2.5 V12.5 Q6 15.5 0.7 12.5 Z" fill="url(#g610)" stroke="#8a5a08" stroke-width="1"/><ellipse cx="6" cy="2.7" rx="4.5" ry="1.6" fill="#fff3c0"/></svg>
<div class="a" style="left:476px;top:481px;width:152px;height:41px;border:5px solid #fd7f28"></div>
<div class="a" style="left:470px;top:475px;width:7px;height:7px;background:#7f9cc4"></div>
<div class="a" style="left:470px;top:500px;width:7px;height:7px;background:#7f9cc4"></div>
<div class="a" style="left:470px;top:524px;width:7px;height:7px;background:#7f9cc4"></div>
<div class="a" style="left:550px;top:475px;width:7px;height:7px;background:#7f9cc4"></div>
<div class="a" style="left:550px;top:524px;width:7px;height:7px;background:#7f9cc4"></div>
<div class="a" style="left:629px;top:475px;width:7px;height:7px;background:#7f9cc4"></div>
<div class="a" style="left:629px;top:500px;width:7px;height:7px;background:#7f9cc4"></div>
<div class="a" style="left:629px;top:524px;width:7px;height:7px;background:#7f9cc4"></div>
<div class="a" style="left:609px;top:466px;width:17px;height:15px;background:#fff;border:1px solid #000"></div>
<svg style="left:613px;top:468px" width="9" height="11" viewBox="0 0 9 11"><path d="M2 1.5 L6.5 5.5 L2 9.5" fill="none" stroke="#000" stroke-width="1.8"/></svg>
<div class="t" style="left:441px;top:393px;font-size:20px;letter-spacing:0.15px;color:#fd7f28">Field Bound to Hyperlink</div>
<svg style="left:503px;top:421px" width="32" height="49" viewBox="0 0 32 49"><path d="M9.5 2 H22.5 V23 H29 L16 45.5 L3 23 H9.5 Z" fill="#fff" stroke="#fd7f28" stroke-width="3.2" stroke-linejoin="round"/></svg>
<!-- group and sort -->
<div class="a" style="left:63px;top:797px;width:1378px;height:34px;background:#dcdcdc;border-top:1px solid #c4c4c4;border-bottom:1px solid #cfcfcf"></div>
<div class="t" style="left:71px;top:807px;font-weight:bold;font-size:16.8px;color:#222">Group and Sort</div>
<svg style="left:1387px;top:806px" width="44" height="15" viewBox="0 0 44 15"><path d="M2 1 H10 M3.5 1 V6 L1 8.5 H11 L8.5 6 V1 M6 8.5 V14" fill="none" stroke="#666" stroke-width="1.3"/><path d="M30 1.5 L42 13.5 M42 1.5 L30 13.5" stroke="#666" stroke-width="1.4"/></svg>
<div class="a" style="left:63px;top:831px;width:1378px;height:35px;background:#f0f0f0;border-bottom:1px solid #d0d0d0"></div>
<svg style="left:75px;top:837px" width="22" height="22" viewBox="75 837 22 22"><path d="M91.5 839.8 H94.5 V842.8 M77.5 853.5 V856.5 H80.5" fill="none" stroke="#555" stroke-width="1"/><rect x="77.2" y="839.4" width="11.2" height="14.2" rx="1.5" fill="#4a88cf"/><rect x="82.4" y="844.4" width="13.4" height="13.4" rx="1.5" fill="#f0f0f0"/><rect x="83.2" y="845.2" width="11.8" height="11.8" rx="1.2" fill="#339a52"/></svg>
<div class="t" style="left:102px;top:840px;font-size:18px;letter-spacing:0.3px">Add a Group</div>
<svg style="left:209px;top:846px" width="7" height="4" viewBox="0 0 7 4"><path d="M0 0 H7 L3.5 4 Z" fill="#333"/></svg>
<svg style="left:236px;top:837px" width="22" height="22" viewBox="236 837 22 22"><path d="M238.1 839.2 H249.7 L243.9 848.8 Z" fill="#4a88cf"/><path d="M244.2 857 H255.8 L250 847.3 Z" fill="#339a52"/></svg>
<div class="t" style="left:263px;top:840px;font-size:18px;letter-spacing:0.4px">Add a Sort</div>
<svg style="left:353px;top:846px" width="7" height="4" viewBox="0 0 7 4"><path d="M0 0 H7 L3.5 4 Z" fill="#333"/></svg>
<svg style="left:380px;top:840px" width="16" height="16" viewBox="0 0 16 16"><path d="M1 1 L15 15 M15 1 L1 15" stroke="#b4b4b4" stroke-width="2"/></svg>
<div class="t" style="left:405px;top:840px;font-size:18px;color:#8a8a8a">Delete</div>
<div class="a" style="left:464px;top:833px;width:1px;height:30px;background:#d0d0d0"></div>
<svg style="left:476px;top:837px" width="22" height="22" viewBox="0 0 22 22"><circle cx="11" cy="11" r="10.5" fill="#c4c4c4"/><path d="M11 17 V7 M6.5 11 L11 6 L15.5 11" fill="none" stroke="#fff" stroke-width="2.6"/></svg>
<div class="t" style="left:503px;top:840px;font-size:18px;color:#8a8a8a;letter-spacing:0.3px">Move Up</div>
<svg style="left:591px;top:837px" width="22" height="22" viewBox="0 0 22 22"><circle cx="11" cy="11" r="10.5" fill="#c4c4c4"/><path d="M11 5 V15 M6.5 11 L11 16 L15.5 11" fill="none" stroke="#fff" stroke-width="2.6"/></svg>
<div class="t" style="left:618px;top:840px;font-size:18px;color:#8a8a8a;letter-spacing:0.3px">Move Down</div>
<div class="a" style="left:63px;top:866px;width:1378px;height:32px;background:#f0f0f0;border-bottom:1px solid #b4b4b4"></div>
<div class="a" style="left:403px;top:866px;width:1px;height:31px;background:#c8c8c8"></div>
<div class="a" style="left:541px;top:866px;width:1px;height:31px;background:#c8c8c8"></div>
<div class="a" style="left:679px;top:866px;width:1px;height:31px;background:#c8c8c8"></div>
<div class="a" style="left:817px;top:866px;width:1px;height:31px;background:#c8c8c8"></div>
<div class="t" style="left:70px;top:873px;font-size:15.5px;color:#888">Field Name</div>
<div class="t" style="left:411px;top:873px;font-size:15.5px;color:#888">Sort Order</div>
<div class="t" style="left:548px;top:873px;font-size:15.5px;color:#888">Show Header</div>
<div class="t" style="left:686px;top:873px;font-size:15.5px;color:#888">Show Footer</div>
<div class="a" style="left:63px;top:898px;width:1378px;height:99px;background:#fff"></div>
<div class="a" style="left:63px;top:997px;width:1378px;height:38px;background:#dcdcdc"></div>
<div class="a" style="left:67px;top:997px;width:159px;height:34px;background:#f0f0f0;border:1px solid #c8c8c8;border-top:none"></div>
<div class="a" style="left:225px;top:998px;width:144px;height:33px;background:#ececec;border:1px solid #c8c8c8"></div>
<svg style="left:80px;top:1003px" width="23" height="21" viewBox="0 0 23 21"><rect x="0" y="0" width="14" height="12" fill="#4a88cf"/><path d="M7 8 H23 L15 20 Z" fill="#339a52" stroke="#f0f0f0" stroke-width="1"/></svg>
<div class="t" style="left:107px;top:1006px;font-size:16px">Group and Sort</div>
<svg style="left:238px;top:1001px" width="24" height="24" viewBox="0 0 24 24"><rect x="0.75" y="1.75" width="19.5" height="19" fill="#fff" stroke="#777" stroke-width="1.5"/><rect x="1" y="1" width="19" height="3.5" fill="#4a88cf"/><path d="M8 9 L4.5 12 L8 15" fill="none" stroke="#777" stroke-width="1.3"/><circle cx="17" cy="17.5" r="6" fill="#d33145" stroke="#fff" stroke-width="1"/><path d="M14.5 15 L19.5 20 M19.5 15 L14.5 20" stroke="#fff" stroke-width="1.5"/></svg>
<div class="t" style="left:265px;top:1006px;font-size:15.5px">Scripts Errors</div>

<!-- right panel -->
<div class="a" style="left:1442px;top:229px;width:457px;height:34px;background:#dcdcdc;border-bottom:1px solid #c8c8c8"></div>
<div class="t" style="left:1448px;top:238px;font-size:16.5px;font-weight:bold;color:#222;letter-spacing:0.039px">Field List</div>
<svg style="left:1818px;top:239px" width="72" height="14" viewBox="0 0 72 14"><rect x="1.5" y="1.5" width="10.5" height="10.5" fill="none" stroke="#555" stroke-width="1.3"/><path d="M30 1 H38 M31.5 1 V6 L29 8.5 H39 L36.5 6 V1 M34 8.5 V14" fill="none" stroke="#555" stroke-width="1.3"/><path d="M59 1 L70.5 12.5 M70.5 1 L59 12.5" stroke="#555" stroke-width="1.4"/></svg>
<div class="a" style="left:1442px;top:263px;width:457px;height:332px;background:#fff"></div>
<div class="a" style="left:1511px;top:543px;width:363px;height:28px;background:#d3d3d3"></div>
<div class="a" style="left:1875px;top:263px;width:24px;height:332px;background:#f0f0f0"></div>
<div class="a" style="left:1875px;top:263px;width:24px;height:27px;background:#fff;border:1px solid #b8b8b8"></div>
<div class="a" style="left:1875px;top:289px;width:24px;height:256px;background:#fff;border:1px solid #b8b8b8"></div>
<div class="a" style="left:1875px;top:569px;width:24px;height:26px;background:#fff;border:1px solid #b8b8b8"></div>
<svg style="left:1882px;top:271px" width="10" height="6" viewBox="0 0 10 6"><path d="M0 5.5 L5 0 L10 5.5 Z" fill="#666"/></svg>
<svg style="left:1882px;top:579px" width="10" height="6" viewBox="0 0 10 6"><path d="M0 0 L5 5.5 L10 0 Z" fill="#666"/></svg>
<svg style="left:1448px;top:273px" width="12" height="8" viewBox="0 0 12 8"><path d="M1 1 L6 6.5 L11 1" fill="none" stroke="#333" stroke-width="1.6"/></svg>
<svg style="left:1471px;top:301px" width="12" height="8" viewBox="0 0 12 8"><path d="M1 1 L6 6.5 L11 1" fill="none" stroke="#333" stroke-width="1.6"/></svg>
<svg style="left:1450px;top:579px" width="8" height="12" viewBox="0 0 8 12"><path d="M1 1 L6.5 6 L1 11" fill="none" stroke="#333" stroke-width="1.6"/></svg>
<svg style="left:1465px;top:266px" width="24" height="21" viewBox="0 0 24 21"><rect x="0.75" y="0.75" width="22.5" height="19.5" fill="#fff" stroke="#6b6b73" stroke-width="1.5"/><path d="M8 6 Q12 4 16 6 V15 Q12 17 8 15 Z" fill="#f2963a"/><ellipse cx="12" cy="6.3" rx="3" ry="1" fill="#fff"/></svg>
<div class="t" style="left:1493px;top:270px;color:#222;letter-spacing:-0.736px">VDMData</div>
<svg style="left:1489px;top:296px" width="22" height="18" viewBox="0 0 22 18"><rect x="0" y="0" width="22" height="5" fill="#f2963a"/><g fill="#b4b4b8"><rect x="0" y="7" width="6" height="4"/><rect x="8" y="7" width="6" height="4"/><rect x="16" y="7" width="6" height="4"/><rect x="0" y="13" width="6" height="5"/><rect x="8" y="13" width="6" height="5"/><rect x="16" y="13" width="6" height="5"/></g></svg>
<div class="t" style="left:1516px;top:298px;color:#222;letter-spacing:-0.372px">Details</div>
<svg style="left:1511px;top:323px" width="24" height="21" viewBox="0 0 24 21"><rect x="0.75" y="3.5" width="22.5" height="16.75" fill="#fff" stroke="#6b6b73" stroke-width="1.5"/><rect x="0" y="0" width="24" height="4" fill="#f2963a"/><text x="12" y="16.5" text-anchor="middle" font-family="Liberation Sans" font-weight="bold" font-size="11.5" fill="#4a88cf">12</text></svg>
<div class="t" style="left:1539px;top:326px;color:#222;letter-spacing:-0.637px">@VDMEX.NewExpression</div>
<svg style="left:1511px;top:351px" width="24" height="21" viewBox="0 0 24 21"><rect x="0.75" y="3.5" width="22.5" height="16.75" fill="#fff" stroke="#6b6b73" stroke-width="1.5"/><rect x="0" y="0" width="24" height="4" fill="#f2963a"/><text x="12" y="16.5" text-anchor="middle" font-family="Liberation Mono" font-weight="bold" font-size="12.5" fill="#4a88cf" letter-spacing="-1">ab</text></svg>
<div class="t" style="left:1539px;top:354px;color:#222">Address</div>
<svg style="left:1511px;top:379px" width="24" height="21" viewBox="0 0 24 21"><rect x="0.75" y="3.5" width="22.5" height="16.75" fill="#fff" stroke="#6b6b73" stroke-width="1.5"/><rect x="0" y="0" width="24" height="4" fill="#f2963a"/><text x="12" y="16.5" text-anchor="middle" font-family="Liberation Mono" font-weight="bold" font-size="12.5" fill="#4a88cf" letter-spacing="-1">ab</text></svg>
<div class="t" style="left:1539px;top:382px;color:#222">City</div>
<svg style="left:1511px;top:407px" width="24" height="21" viewBox="0 0 24 21"><rect x="0.75" y="3.5" width="22.5" height="16.75" fill="#fff" stroke="#6b6b73" stroke-width="1.5"/><rect x="0" y="0" width="24" height="4" fill="#f2963a"/><text x="12" y="16.5" text-anchor="middle" font-family="Liberation Mono" font-weight="bold" font-size="12.5" fill="#4a88cf" letter-spacing="-1">ab</text></svg>
<div class="t" style="left:1539px;top:410px;color:#222">ContactName</div>
<svg style="left:1511px;top:435px" width="24" height="21" viewBox="0 0 24 21"><rect x="0.75" y="3.5" width="22.5" height="16.75" fill="#fff" stroke="#6b6b73" stroke-width="1.5"/><rect x="0" y="0" width="24" height="4" fill="#f2963a"/><text x="12" y="16.5" text-anchor="middle" font-family="Liberation Sans" font-weight="bold" font-size="11.5" fill="#4a88cf">12</text></svg>
<div class="t" style="left:1539px;top:438px;color:#222">EmployeeID</div>
<svg style="left:1511px;top:463px" width="24" height="21" viewBox="0 0 24 21"><rect x="0.75" y="3.5" width="22.5" height="16.75" fill="#fff" stroke="#6b6b73" stroke-width="1.5"/><rect x="0" y="0" width="24" height="4" fill="#f2963a"/><text x="12" y="16.5" text-anchor="middle" font-family="Liberation Sans" font-weight="bold" font-size="11" fill="#4a88cf" letter-spacing="-0.5">1,2</text></svg>
<div class="t" style="left:1539px;top:466px;color:#222">Freight</div>
<svg style="left:1511px;top:491px" width="24" height="21" viewBox="0 0 24 21"><rect x="0.75" y="3.5" width="22.5" height="16.75" fill="#fff" stroke="#6b6b73" stroke-width="1.5"/><rect x="0" y="0" width="24" height="4" fill="#f2963a"/><circle cx="12" cy="12.5" r="5" fill="none" stroke="#4a88cf" stroke-width="1.4"/><path d="M12 9.5 V12.8 H14.5" fill="none" stroke="#4a88cf" stroke-width="1.2"/></svg>
<div class="t" style="left:1539px;top:494px;color:#222">OrderDate</div>
<svg style="left:1511px;top:519px" width="24" height="21" viewBox="0 0 24 21"><rect x="0.75" y="3.5" width="22.5" height="16.75" fill="#fff" stroke="#6b6b73" stroke-width="1.5"/><rect x="0" y="0" width="24" height="4" fill="#f2963a"/><text x="12" y="16.5" text-anchor="middle" font-family="Liberation Sans" font-weight="bold" font-size="11.5" fill="#4a88cf">12</text></svg>
<div class="t" style="left:1539px;top:522px;color:#222">OrderID</div>
<svg style="left:1511px;top:547px" width="24" height="21" viewBox="0 0 24 21"><rect x="0.75" y="3.5" width="22.5" height="16.75" fill="#fff" stroke="#6b6b73" stroke-width="1.5"/><rect x="0" y="0" width="24" height="4" fill="#f2963a"/><circle cx="12" cy="12.5" r="5" fill="none" stroke="#4a88cf" stroke-width="1.4"/><path d="M12 9.5 V12.8 H14.5" fill="none" stroke="#4a88cf" stroke-width="1.2"/></svg>
<div class="t" style="left:1539px;top:550px;color:#222">ShippedDate</div>
<svg style="left:1465px;top:574px" width="24" height="21" viewBox="0 0 24 21"><rect x="0.75" y="3.5" width="22.5" height="16.75" fill="#fff" stroke="#6b6b73" stroke-width="1.5"/><rect x="0" y="0" width="24" height="4" fill="#f2963a"/><text x="12" y="17.5" text-anchor="middle" font-family="Liberation Sans" font-weight="bold" font-size="11" fill="#4a88cf">?</text></svg>
<div class="t" style="left:1493px;top:578px;color:#222">Parameters</div>
<div class="a" style="left:1442px;top:595px;width:457px;height:37px;background:#dcdcdc"></div>
<div class="a" style="left:1445px;top:595px;width:160px;height:33px;background:#efefef;border:1px solid #c8c8c8;border-top:none"></div>
<div class="a" style="left:1604px;top:595px;width:113px;height:35px;background:#f0f0f0;border:1px solid #c8c8c8;border-top:none"></div>
<svg style="left:1458px;top:600px" width="21" height="20" viewBox="0 0 21 20"><g fill="#f2963a"><rect x="7" y="0" width="7" height="6"/><rect x="0" y="13" width="7" height="6"/><rect x="14" y="13" width="7" height="6"/></g><path d="M10.5 6 V9.5 M3.5 13 V9.5 H17.5 V13" fill="none" stroke="#6b6b73" stroke-width="1.5"/></svg>
<div class="t" style="left:1485px;top:604px;color:#222;letter-spacing:-0.056px">Report Explorer</div>
<svg style="left:1619px;top:600px" width="22" height="22" viewBox="0 0 22 22"><path d="M0 3 Q7 0 14 3 V14 Q7 17 0 14 Z" fill="#f2963a"/><ellipse cx="7" cy="3" rx="7" ry="2.2" fill="#f7b06a"/><rect x="9.5" y="11.5" width="12" height="4.5" fill="#f0f0f0" stroke="#6b6b73" stroke-width="1.3"/><rect x="9.5" y="16.5" width="12" height="4.5" fill="#f0f0f0" stroke="#6b6b73" stroke-width="1.3"/></svg>
<div class="t" style="left:1645px;top:604px;color:#222;letter-spacing:-0.202px">Field List</div>
<div class="a" style="left:1442px;top:632px;width:457px;height:35px;background:#cfdcf2;border-top:1px solid #c0cde0;border-bottom:1px solid #c8c8c8"></div>
<div class="t" style="left:1448px;top:642px;font-size:17px;font-weight:bold;color:#222;letter-spacing:0.042px">Properties</div>
<svg style="left:1818px;top:643px" width="72" height="14" viewBox="0 0 72 14"><rect x="1.5" y="1.5" width="10.5" height="10.5" fill="none" stroke="#555" stroke-width="1.3"/><path d="M30 1 H38 M31.5 1 V6 L29 8.5 H39 L36.5 6 V1 M34 8.5 V14" fill="none" stroke="#555" stroke-width="1.3"/><path d="M59 1 L70.5 12.5 M70.5 1 L59 12.5" stroke="#555" stroke-width="1.4"/></svg>
<div class="a" style="left:1458px;top:680px;width:426px;height:32px;background:#fff;border:1px solid #a8a8a8"></div>
<div class="t" style="left:1462px;top:689px;font-size:16.5px;font-weight:bold;color:#222;letter-spacing:0.538px">label2</div>
<div class="t" style="left:1529px;top:689px;font-size:16.5px;font-weight:bold;color:#222;letter-spacing:0.142px">Label</div>
<svg style="left:1868px;top:694px" width="9" height="5" viewBox="0 0 9 5"><path d="M0 0 H9 L4.5 4.5 Z" fill="#555"/></svg>
<svg style="left:1445px;top:725px" width="45" height="45" viewBox="1445 725 45 45">
<path d="M1470.8 743.2 L1478.4 735.3 L1484 740.8 L1476.6 749 Z" fill="#d33145"/>
<path d="M1466.1 747.6 L1469.5 744.7 L1475 750.5 L1471.3 753.7 Z" fill="#6b6b73"/>
<path d="M1454.2 762.7 Q1458 755 1462.9 750.8 Q1465.5 749 1469 755 Q1466 760 1462 761.5 Q1458 762.8 1454.2 762.7 Z" fill="#f2963a"/>
</svg>
<svg style="left:1505px;top:732px" width="35" height="35" viewBox="1505 732 35 35"><g fill="#4a88cf"><polygon points="1527.96,734.41 1531.64,734.41 1531.88,736.99 1533.45,737.89 1535.80,736.81 1537.64,740.00 1535.53,741.49 1535.53,743.31 1537.64,744.80 1535.80,747.99 1533.45,746.91 1531.88,747.81 1531.64,750.39 1527.96,750.39 1527.72,747.81 1526.15,746.91 1523.80,747.99 1521.96,744.80 1524.07,743.31 1524.07,741.49 1521.96,740.00 1523.80,736.81 1526.15,737.89 1527.72,736.99" /><polygon points="1514.26,747.51 1517.94,747.51 1518.18,750.09 1519.75,750.99 1522.10,749.91 1523.94,753.10 1521.83,754.59 1521.83,756.41 1523.94,757.90 1522.10,761.09 1519.75,760.01 1518.18,760.91 1517.94,763.49 1514.26,763.49 1514.02,760.91 1512.45,760.01 1510.10,761.09 1508.26,757.90 1510.37,756.41 1510.37,754.59 1508.26,753.10 1510.10,749.91 1512.45,750.99 1514.02,750.09" /></g><circle cx="1529.8" cy="742.4" r="2.4" fill="#f0f0f0"/><circle cx="1516.1" cy="755.5" r="2.4" fill="#f0f0f0"/></svg>
<svg style="left:1560px;top:730px" width="35" height="38" viewBox="1560 730 35 38"><g fill="#f2963a">
<path d="M1566.1 740.3 Q1566.1 735.1 1577 735.1 Q1587.9 735.1 1587.9 740.3 V743 Q1587.9 748 1577 748 Q1566.1 748 1566.1 743 Z"/>
<path d="M1566.1 747 Q1577 751.5 1587.9 747 V750.5 Q1587.9 754.2 1577 754.2 Q1566.1 754.2 1566.1 750.5 Z"/>
<path d="M1566.1 753.3 Q1577 757.8 1587.9 753.3 V758.3 Q1587.9 762.6 1577 762.6 Q1566.1 762.6 1566.1 758.3 Z"/>
</g></svg>
<svg style="left:1612px;top:730px" width="35" height="35" viewBox="1612 730 35 35">
<defs><mask id="wm"><rect x="1612" y="730" width="35" height="35" fill="#fff"/><circle cx="1625.3" cy="742.2" r="3.3" fill="#000"/><path d="M1622.9 744.6 L1614 735.7 L1618.7 731 L1627.7 739.8 Z" fill="#000"/></mask></defs>
<g mask="url(#wm)" fill="#6b6b73"><circle cx="1626.6" cy="744.4" r="8.8"/></g>
<path d="M1629.5 747.5 L1640.6 758.6" stroke="#6b6b73" stroke-width="4.6" stroke-linecap="round"/>
</svg>
<svg style="left:1670px;top:734px" width="31" height="29" viewBox="0 0 31 29"><path d="M15.5 0 L19.2 10.6 L30.5 10.8 L21.5 17.6 L24.8 28.5 L15.5 22 L6.2 28.5 L9.5 17.6 L0.5 10.8 L11.8 10.6 Z" fill="#4a88cf"/></svg>
<div class="a" style="left:1442px;top:772px;width:457px;height:1px;background:#d8d8d8"></div>
<svg style="left:1510px;top:760px" width="26" height="14" viewBox="1510 760 26 14"><path d="M1513 772.6 L1523.2 762.4 L1533.2 772.6" fill="#f0f0f0" stroke="#c4c4c4" stroke-width="1.2"/></svg>
<div class="a" style="left:1729px;top:734px;width:166px;height:30px;background:#fff;border:1px solid #a8a8a8"></div>
<div class="t" style="left:1733px;top:742px;color:#888;letter-spacing:-0.166px">Enter text to search</div>
<svg style="left:1877px;top:740px" width="15" height="15" viewBox="0 0 15 15"><circle cx="9" cy="6" r="4.8" fill="none" stroke="#666" stroke-width="1.4"/><path d="M5.5 9.5 L1 14" stroke="#666" stroke-width="1.6"/></svg>
<svg style="left:1456px;top:794px" width="12" height="8" viewBox="0 0 12 8"><path d="M1 1 L6 6.5 L11 1" fill="none" stroke="#555" stroke-width="1.5"/></svg>
<div class="t" style="left:1476px;top:790px;color:#222;letter-spacing:-0.414px">Scripts</div>
<div class="a" style="left:1636px;top:784px;width:221px;height:28px;background:#fff;border:1px solid #a8a8a8"></div>
<div class="t" style="left:1640px;top:790px;color:#222;letter-spacing:-0.143px">(Label Scripts)</div>
<div class="t" style="left:1507px;top:827px;color:#222;letter-spacing:0.061px">After Print</div>
<div class="a" style="left:1636px;top:820px;width:221px;height:28px;background:#fff;border:1px solid #a8a8a8"></div>
<svg style="left:1841px;top:832px" width="9" height="5" viewBox="0 0 9 5"><path d="M0 0 H9 L4.5 4.5 Z" fill="#555"/></svg>
<div class="t" style="left:1506px;top:863px;color:#222;letter-spacing:-0.157px">Before Print</div>
<div class="a" style="left:1636px;top:856px;width:221px;height:28px;background:#fff;border:1px solid #5b7cb3"></div>
<div class="a" style="left:1834px;top:857px;width:22px;height:26px;background:#cfdcf2;border-left:1px solid #a3b6d6"></div>
<svg style="left:1841px;top:868px" width="9" height="5" viewBox="0 0 9 5"><path d="M0 0 H9 L4.5 4.5 Z" fill="#555"/></svg>
<div class="a" style="left:1640px;top:862px;width:1px;height:16px;background:#222"></div>
<div class="t" style="left:1506px;top:899px;color:#222;letter-spacing:-0.151px">Click in Preview</div>
<div class="a" style="left:1870px;top:794px;width:10px;height:9px;border:1px solid #888;background:#f0f0f0"></div>
<div class="a" style="left:1870px;top:830px;width:10px;height:9px;border:1px solid #888;background:#f0f0f0"></div>
<div class="a" style="left:1870px;top:866px;width:10px;height:9px;border:1px solid #888;background:#f0f0f0"></div>
<div class="a" style="left:1870px;top:902px;width:10px;height:9px;border:1px solid #888;background:#f0f0f0"></div>
<div class="a" style="left:1636px;top:884px;width:222px;height:44px;background:#fff;border:1px solid #b0b0b0;box-shadow:1px 1px 2px rgba(0,0,0,0.15)"></div>
<div class="a" style="left:1637px;top:885px;width:220px;height:28px;background:#cfdcf2"></div>
<div class="t" style="left:1640px;top:893px;color:#222;letter-spacing:-0.053px">(New)</div>
<div class="a" style="left:1442px;top:931px;width:457px;height:1px;background:#d0d0d0"></div>
<div class="a" style="left:1443px;top:851px;width:454px;height:78px;border:5px solid #fd7f28"></div>
<div class="t" style="left:1454px;top:961px;font-size:16.5px;font-weight:bold;color:#222;letter-spacing:0.364px">Before Print</div>
<div class="a" style="left:1442px;top:996px;width:457px;height:39px;background:#dcdcdc"></div>
<div class="a" style="left:1444px;top:996px;width:122px;height:36px;background:#f0f0f0;border:1px solid #c8c8c8;border-top:none"></div>
<div class="a" style="left:1565px;top:997px;width:149px;height:33px;background:#ececec;border:1px solid #c8c8c8"></div>
<svg style="left:1458px;top:1002px" width="23" height="22" viewBox="0 0 23 22"><rect x="0" y="0" width="17" height="2.5" fill="#4a88cf"/><g fill="#a8a8ad"><rect x="0" y="-10" width="0" height="0"/><rect x="0" y="5" width="3" height="2.5"/><rect x="5" y="5" width="12" height="2.5"/><rect x="0" y="10" width="3" height="2.5"/><rect x="5" y="10" width="8" height="2.5"/><rect x="0" y="15" width="3" height="2.5"/><rect x="5" y="15" width="6" height="2.5"/></g><g fill="#4a88cf"><polygon points="23.00,15.50 22.88,16.77 20.82,17.29 20.39,18.10 21.10,20.10 20.11,20.90 18.29,19.82 17.41,20.09 16.50,22.00 15.23,21.88 14.71,19.82 13.90,19.39 11.90,20.10 11.10,19.11 12.18,17.29 11.91,16.41 10.00,15.50 10.12,14.23 12.18,13.71 12.61,12.90 11.90,10.90 12.89,10.10 14.71,11.18 15.59,10.91 16.50,9.00 17.77,9.12 18.29,11.18 19.10,11.61 21.10,10.90 21.90,11.89 20.82,13.71 21.09,14.59" /></g><circle cx="16.5" cy="15.5" r="2" fill="#f0f0f0"/></svg>
<div class="t" style="left:1485px;top:1006px;color:#222;letter-spacing:-0.252px">Properties</div>
<svg style="left:1578px;top:1002px" width="22" height="22" viewBox="0 0 22 22"><rect x="0.75" y="0.75" width="15" height="17" fill="#ececec" stroke="#6b6b73" stroke-width="1.5"/><rect x="4.75" y="3.75" width="16.5" height="17.5" fill="#fff" stroke="#6b6b73" stroke-width="1.5"/><rect x="8" y="13" width="2.5" height="5" fill="#f2963a"/><rect x="11.5" y="10" width="2.5" height="8" fill="#4a88cf"/><rect x="15" y="7" width="2.5" height="11" fill="#d33145"/></svg>
<div class="t" style="left:1605px;top:1006px;color:#222;letter-spacing:-0.167px">Report Gallery</div>
<!-- status -->
<div class="a" style="left:0;top:1034px;width:1899px;height:37px;background:#dcdcdc;border-top:1px solid #c8c8c8"></div>
<div class="t" style="left:8px;top:1045px;color:#222;letter-spacing:0.172px">label2 { Location:156,0 Size:100,23 }</div>
<div class="t" style="left:1605px;top:1045px;color:#222;letter-spacing:0.145px">100%</div>
<div class="a" style="left:1660px;top:1050px;width:12px;height:2.5px;background:#555"></div>
<div class="a" style="left:1677px;top:1051px;width:84px;height:1px;background:#4e6d9b"></div>
<div class="a" style="left:1761px;top:1051px;width:90px;height:1px;background:#999"></div>
<div class="a" style="left:1760px;top:1042px;width:7px;height:19px;background:#555"></div>
<div class="a" style="left:1854px;top:1050px;width:12px;height:2.5px;background:#555"></div>
<div class="a" style="left:1858.8px;top:1045.5px;width:2.5px;height:12px;background:#555"></div>
<svg style="left:1877px;top:1047px" width="16" height="16" viewBox="0 0 16 16"><g fill="#999"><circle cx="13" cy="2" r="1.3"/><circle cx="9" cy="8" r="1.3"/><circle cx="13" cy="8" r="1.3"/><circle cx="5" cy="14" r="1.3"/><circle cx="9" cy="14" r="1.3"/><circle cx="13" cy="14" r="1.3"/></g></svg>
<div class="a" style="left:0;top:1070px;width:1899px;height:1px;background:#4e6d9b"></div>
<div class="a" style="left:63px;top:229px;width:1px;height:806px;background:#c8c8c8"></div>
<!-- left window border -->
<div class="a" style="left:0;top:84px;width:1px;height:987px;background:#4e6d9b"></div>
</body></html>
